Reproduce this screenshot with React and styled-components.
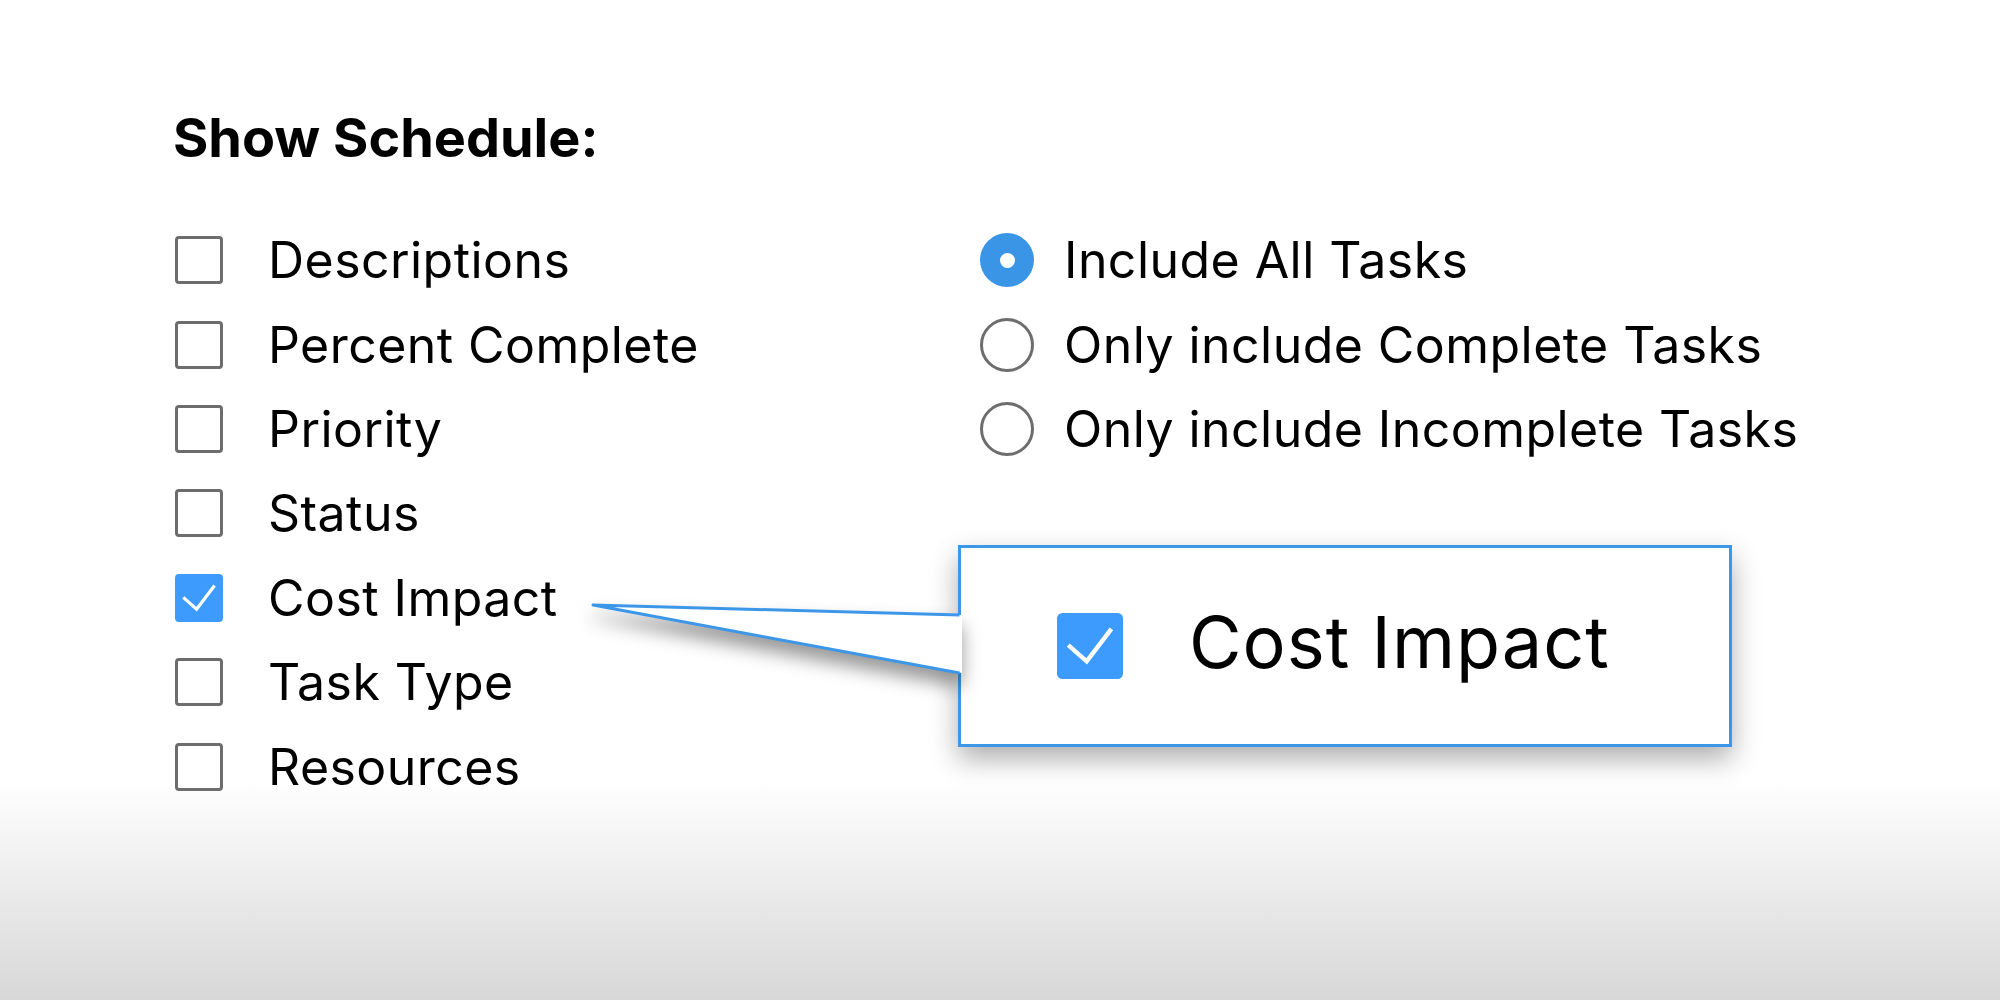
import styled, { createGlobalStyle } from 'styled-components';

const GlobalStyle = createGlobalStyle`
  html, body {
    margin: 0;
    padding: 0;
  }
  body {
    font-family: Inter, "Liberation Sans", sans-serif;
    color: #000;
  }
`;

const Page = styled.div`
  position: relative;
  box-sizing: border-box;
  width: 2000px;
  height: 1000px;
  overflow: hidden;
  padding: 105px 0 0 175px;
  background: linear-gradient(to bottom, #fff 0, #fff 780px, #d7d7d7 1000px);
`;

const Title = styled.h2`
  margin: 0 0 0 -2px;
  font-size: 54px;
  font-weight: 700;
  line-height: 66px;
`;

const Columns = styled.div`
  display: flex;
  margin-top: 47px;
`;

const Column = styled.div`
  display: flex;
  flex-direction: column;
  width: ${(p) => p.width || 'auto'};
`;

const Row = styled.label`
  display: flex;
  align-items: center;
  height: 84.4px;
  font-size: 50px;
  letter-spacing: 0.45px;
  gap: ${(p) => p.gap}px;
`;

const Box = styled.span`
  box-sizing: border-box;
  display: inline-flex;
  align-items: center;
  justify-content: center;
  flex: none;
  width: ${(p) => p.size}px;
  height: ${(p) => p.size}px;
  border-radius: ${(p) => p.size / 12}px;
  border: ${(p) => (p.checked ? 'none' : '3px solid #6d6d6d')};
  background: ${(p) => (p.checked ? '#3d9bfe' : '#fff')};

  svg {
    width: 100%;
    height: 100%;
  }
`;

const Radio = styled.span`
  box-sizing: border-box;
  display: inline-flex;
  align-items: center;
  justify-content: center;
  flex: none;
  width: 54px;
  height: 54px;
  border-radius: 50%;
  border: ${(p) => (p.checked ? 'none' : '3px solid #6d6d6d')};
  background: ${(p) => (p.checked ? '#3b95e6' : '#fff')};

  &::after {
    content: '';
    display: ${(p) => (p.checked ? 'block' : 'none')};
    width: 15px;
    height: 15px;
    border-radius: 50%;
    background: #fff;
  }
`;

const Callout = styled.div`
  position: absolute;
  left: 958px;
  top: 545px;
`;

const CalloutBox = styled.div`
  box-sizing: border-box;
  display: flex;
  align-items: center;
  gap: 66px;
  width: 774px;
  height: 202px;
  padding-left: 96px;
  border: 3px solid #3d97e8;
  background: #fff;
  box-shadow: 0 12px 26px rgba(0, 0, 0, 0.32);
  font-size: 72px;
  letter-spacing: 1px;
`;

const CalloutLabel = styled.span`
  margin-bottom: 10px;
`;

const Pointer = styled.svg`
  position: absolute;
  left: -366px;
  top: 0;
  width: 372px;
  height: 140px;
  overflow: visible;
  filter: drop-shadow(0 12px 9px rgba(0, 0, 0, 0.4));
  z-index: 1;
`;

const Check = () => (
  <svg viewBox="0 0 24 24" fill="none">
    <path d="M4.7 12.2 L10.8 17.6 L19.3 6.4" stroke="#fff" strokeWidth="1.6" strokeLinecap="square" />
  </svg>
);

const Checkbox = ({ checked, size = 48 }) => (
  <Box checked={checked} size={size}>
    {checked && <Check />}
  </Box>
);

const fields = [
  { label: 'Descriptions' },
  { label: 'Percent Complete' },
  { label: 'Priority' },
  { label: 'Status' },
  { label: 'Cost Impact', checked: true },
  { label: 'Task Type' },
  { label: 'Resources' },
];

const filters = [
  { label: 'Include All Tasks', checked: true },
  { label: 'Only include Complete Tasks' },
  { label: 'Only include Incomplete Tasks' },
];

export default function App() {
  return (
    <>
      <GlobalStyle />
      <Page>
        <Title>Show Schedule:</Title>
        <Columns>
          <Column width="805px">
            {fields.map((f) => (
              <Row key={f.label} gap={45}>
                <Checkbox checked={f.checked} />
                {f.label}
              </Row>
            ))}
          </Column>
          <Column>
            {filters.map((f) => (
              <Row key={f.label} gap={30}>
                <Radio checked={f.checked} />
                {f.label}
              </Row>
            ))}
          </Column>
        </Columns>

        <Callout>
          <Pointer viewBox="-366 0 372 140">
            <polygon points="-365,60 4,70 4,128" fill="#fff" />
            <polyline
              points="1.5,70 -365,60 1.5,128"
              fill="none"
              stroke="#3d97e8"
              strokeWidth="3"
              strokeLinejoin="round"
            />
          </Pointer>
          <CalloutBox>
            <Checkbox checked size={66} />
            <CalloutLabel>Cost Impact</CalloutLabel>
          </CalloutBox>
        </Callout>
      </Page>
    </>
  );
}
